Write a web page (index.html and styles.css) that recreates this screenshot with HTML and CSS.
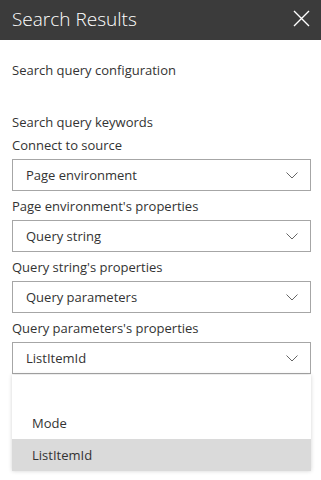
FILE: index.html
```html
<!DOCTYPE html>
<html>
<head>
<meta charset="utf-8">
<link rel="stylesheet" href="styles.css">
</head>
<body>
<div class="panel">
  <div class="header">
    <span class="title">Search Results</span>
    <svg class="close" width="17" height="17" viewBox="0 0 17 17"><path d="M1 1L16 16M16 1L1 16" stroke="#fff" stroke-width="1.4" fill="none"/></svg>
  </div>
  <div class="content">
    <div class="section-title">Search query configuration</div>
    <div class="keywords">Search query keywords</div>
    <div class="label first">Connect to source</div>
    <div class="dropdown"><span>Page environment</span><svg class="chev" width="12" height="7" viewBox="0 0 12 7"><path d="M0.5 0.5L6 6L11.5 0.5" stroke="#666" stroke-width="1" fill="none"/></svg></div>
    <div class="label">Page environment's properties</div>
    <div class="dropdown"><span>Query string</span><svg class="chev" width="12" height="7" viewBox="0 0 12 7"><path d="M0.5 0.5L6 6L11.5 0.5" stroke="#666" stroke-width="1" fill="none"/></svg></div>
    <div class="label">Query string's properties</div>
    <div class="dropdown"><span>Query parameters</span><svg class="chev" width="12" height="7" viewBox="0 0 12 7"><path d="M0.5 0.5L6 6L11.5 0.5" stroke="#666" stroke-width="1" fill="none"/></svg></div>
    <div class="label">Query parameters's properties</div>
    <div class="dropdown"><span>ListItemId</span><svg class="chev" width="12" height="7" viewBox="0 0 12 7"><path d="M0.5 0.5L6 6L11.5 0.5" stroke="#666" stroke-width="1" fill="none"/></svg></div>
    <div class="menu">
      <div class="option"></div>
      <div class="option">Mode</div>
      <div class="option selected">ListItemId</div>
    </div>
  </div>
</div>
</body>
</html>
```
FILE: styles.css
```css
html, body {
  margin: 0;
  padding: 0;
  background: #fff;
}
body {
  font-family: "Open Sans", "Noto Sans", sans-serif;
  color: #333;
  font-size: 13px;
}
.header {
  height: 40px;
  background: #3b3b3b;
  display: flex;
  align-items: center;
  justify-content: space-between;
  padding: 0 11px 0 12px;
}
.title {
  color: #fff;
  font-size: 19px;
  font-weight: 300;
  line-height: 24px;
  margin-top: -2px;
}
.close {
  display: block;
  margin-top: -3px;
}
.content {
  padding: 0 10px 8px 12px;
}
.section-title {
  margin-top: 20px;
  line-height: 20px;
}
.keywords {
  margin-top: 32px;
  line-height: 20px;
}
.label {
  line-height: 20px;
  padding: 5px 0 4px;
}
.label.first {
  padding: 3px 0 4px;
}
.dropdown {
  height: 32px;
  box-sizing: border-box;
  border: 1px solid #a6a6a6;
  display: flex;
  align-items: center;
  justify-content: space-between;
  padding: 0 12px 0 13px;
  background: #fff;
}
.chev {
  display: block;
}
.menu {
  margin-top: 1px;
  background: #fff;
  box-shadow: 0 0 4px rgba(0, 0, 0, 0.18);
}
.option {
  height: 32px;
  line-height: 32px;
  padding-left: 20px;
}
.option.selected {
  background: #dadada;
}
```
